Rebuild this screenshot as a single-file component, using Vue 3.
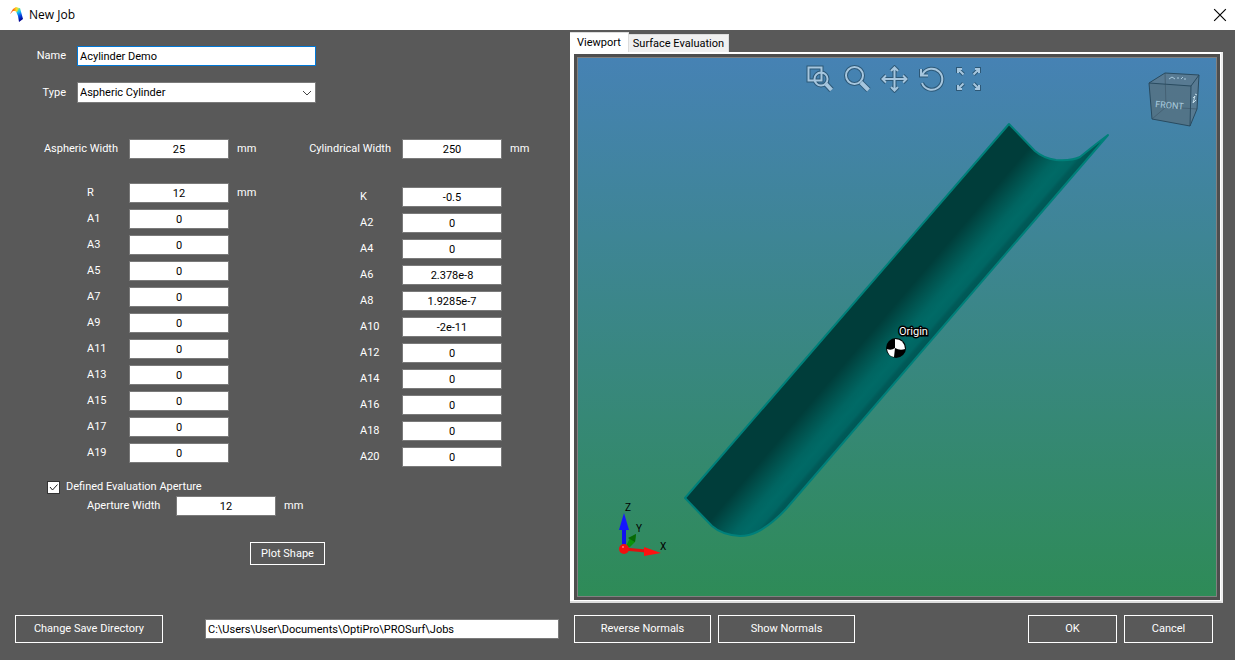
<script setup>
import { ref, reactive } from 'vue'

const name = ref('Acylinder Demo')
const type = ref('Aspheric Cylinder')
const directory = ref('C:\\Users\\User\\Documents\\OptiPro\\PROSurf\\Jobs')
const apertureOn = ref(true)
const apertureWidth = ref('12')
const tab = ref('viewport')

const widths = reactive([
  { id: 'aspheric-width', label: 'Aspheric Width', value: '25' },
  { id: 'cylindrical-width', label: 'Cylindrical Width', value: '250' },
])

const term = (label, value = '0', unit = '') => ({ id: 'coef-' + label, label, value, unit })

const columns = reactive([
  {
    key: 'odd',
    terms: [
      term('R', '12', 'mm'), term('A1'), term('A3'), term('A5'), term('A7'), term('A9'),
      term('A11'), term('A13'), term('A15'), term('A17'), term('A19'),
    ],
  },
  {
    key: 'even',
    terms: [
      term('K', '-0.5'), term('A2'), term('A4'), term('A6', '2.378e-8'), term('A8', '1.9285e-7'),
      term('A10', '-2e-11'), term('A12'), term('A14'), term('A16'), term('A18'), term('A20'),
    ],
  },
])

const tools = [
  {
    label: 'Zoom window',
    d: 'M2.5 2.5H15.5V15.5H2.5ZM21.5 14A6.500 6.500 0 1 1 8.500 14A6.500 6.500 0 1 1 21.5 14Z',
    handle: 'M20 19L25.500 25',
  },
  {
    label: 'Zoom',
    d: 'M20 10.500A8.500 8.500 0 1 1 3 10.500A8.500 8.500 0 1 1 20 10.500Z',
    handle: 'M18 17.500L25.500 25',
  },
  {
    label: 'Pan',
    d: 'M14.5 3V25M3 14H26M11 6L14.500 2.500L18 6M11 22L14.500 25.500L18 22M6 10.500L2.500 14L6 17.500M23 10.500L26.500 14L23 17.500',
  },
  {
    label: 'Rotate',
    d: 'M5 18A10.500 10.500 0 1 0 6 8.500L5 10M4 4V10.500H11',
  },
  {
    label: 'Zoom fit',
    d: 'M4 8V4H8M4 4L9.500 9.500M21 4H25V8M25 4L19.500 9.500M4 20V24H8M4 24L9.500 18.500M21 24H25V20M25 24L19.500 18.500',
  },
]
</script>

<template>
  <div class="window">
    <header class="titlebar">
      <svg class="logo" viewBox="0 0 14 16" aria-hidden="true">
        <defs>
          <linearGradient id="logo-top" x1="0" y1="0" x2="1" y2="0">
            <stop offset="0" stop-color="#e02810" />
            <stop offset="0.400" stop-color="#ff7a10" />
            <stop offset="0.700" stop-color="#ffd820" />
            <stop offset="1" stop-color="#a8e860" />
          </linearGradient>
          <linearGradient id="logo-side" x1="0" y1="0" x2="0.300" y2="1">
            <stop offset="0" stop-color="#f0e020" />
            <stop offset="0.200" stop-color="#60e0a0" />
            <stop offset="0.400" stop-color="#18c0f0" />
            <stop offset="0.650" stop-color="#0850e8" />
            <stop offset="1" stop-color="#000090" />
          </linearGradient>
        </defs>
        <path d="M5 2L10 1L13 12L9 15L8 9Z" fill="url(#logo-side)" />
        <path d="M0 7L3 2L6 0L9 1L7 5L5 4L3 4Z" fill="url(#logo-top)" />
      </svg>
      <h1>New Job</h1>
      <button class="close" type="button" aria-label="Close">
        <svg viewBox="0 0 12 12"><path d="M1 1L11 11M11 1L1 11" /></svg>
      </button>
    </header>

    <main class="content">
      <form class="form" @submit.prevent>
        <div class="head-row">
          <label for="job-name">Name</label>
          <input id="job-name" v-model="name" class="field focused" type="text" />
        </div>
        <div class="head-row type-row">
          <label for="job-type">Type</label>
          <div class="select-wrap">
            <select id="job-type" v-model="type" class="field">
              <option>Aspheric Cylinder</option>
            </select>
            <svg class="chevron" viewBox="0 0 10 6" aria-hidden="true"><path d="M1 1L5 5L9 1" /></svg>
          </div>
        </div>

        <div class="columns widths">
          <div v-for="w in widths" :key="w.id" class="row width-row">
            <label :for="w.id">{{ w.label }}</label>
            <input :id="w.id" v-model="w.value" class="field number" type="text" />
            <span class="unit">mm</span>
          </div>
        </div>

        <div class="columns">
          <div v-for="c in columns" :key="c.key" class="column" :class="c.key">
            <div v-for="t in c.terms" :key="t.id" class="row">
              <label :for="t.id">{{ t.label }}</label>
              <input :id="t.id" v-model="t.value" class="field number" type="text" />
              <span class="unit">{{ t.unit }}</span>
            </div>
          </div>
        </div>

        <label class="check">
          <span class="box">
            <input v-model="apertureOn" type="checkbox" />
            <svg v-if="apertureOn" viewBox="0 0 13 13" aria-hidden="true"><path d="M3 6L5.500 9L10.500 3.500" /></svg>
          </span>
          <span>Defined Evaluation Aperture</span>
        </label>
        <div class="row aperture">
          <label for="aperture">Aperture Width</label>
          <input id="aperture" v-model="apertureWidth" class="field number" type="text" />
          <span class="unit">mm</span>
        </div>
        <button class="btn plot" type="button">Plot Shape</button>
      </form>

      <section class="viewer">
        <div class="tabs" role="tablist">
          <button type="button" role="tab" :class="{ active: tab === 'viewport' }" @click="tab = 'viewport'">Viewport</button>
          <button type="button" role="tab" :class="{ active: tab === 'surface' }" @click="tab = 'surface'">Surface Evaluation</button>
        </div>
        <div class="panel">
          <div class="viewport">
            <svg class="scene" viewBox="577 57 640 540">
              <defs>
                <linearGradient id="shade" gradientUnits="userSpaceOnUse" x1="1009" y1="123" x2="1072" y2="177">
                  <stop offset="0" stop-color="#003d3a" />
                  <stop offset="0.380" stop-color="#003d3a" />
                  <stop offset="0.550" stop-color="#00534f" />
                  <stop offset="0.700" stop-color="#006561" />
                  <stop offset="0.800" stop-color="#006a66" />
                  <stop offset="0.890" stop-color="#006663" />
                  <stop offset="0.930" stop-color="#005a58" />
                  <stop offset="1" stop-color="#005654" />
                </linearGradient>
              </defs>
              <path
                d="M1009 124L1035 151Q1043 158 1056 160Q1072 161 1080 157Q1092 147 1108 135L786 509Q771 525 757 532Q749 536 740 536Q722 535 712 526L685 498Z"
                fill="url(#shade)" stroke="#00807a" stroke-width="2" stroke-linejoin="round"
              />

              <g>
                <path d="M1149 83L1165 73L1199 75L1197 109L1190 126L1152 119Z" fill="#56707f" fill-opacity="0.800" />
                <path d="M1149 83L1165 73L1199 75L1191 86ZM1191 86L1199 75L1197 109L1190 126Z" fill="#5c7f97" fill-opacity="0.600" />
                <path d="M1165 73L1166 107L1152 119M1166 107L1197 109" stroke="#456174" fill="none" />
                <path d="M1149 83L1165 73L1199 75L1191 86ZM1149 83L1152 119L1190 126L1191 86M1199 75L1197 109L1190 126" stroke="#294b60" fill="none" />
                <text x="1155" y="107" transform="rotate(5 1155 107)" class="face">FRONT</text>
                <path d="M1169 79L1172 77L1175 79M1177 78H1179M1181 79L1183 77M1186 79H1184" stroke="#a9cadd" fill="none" />
                <path d="M1193 98L1195 96L1193 103L1196 100M1195 94L1197 95" stroke="#c5deea" fill="none" />
              </g>

              <g>
                <path d="M625 548L630 538L636 534L635 542L630 547Z" fill="#0a930a" />
                <path d="M628 538L636 534L635 542Z" fill="#076807" />
                <path d="M624 548V527" stroke="#1010f0" stroke-width="4" />
                <path d="M624 513L629 530H619Z" fill="#1515ff" />
                <path d="M624 549L646 551" stroke="#e01010" stroke-width="3" />
                <path d="M644 547L661 553L644 556Z" fill="#ff1010" />
                <circle cx="624" cy="549" r="5" fill="#f01010" />
                <circle cx="623" cy="547" r="1" fill="#ff7a7a" />
                <g font-size="10" fill="#000">
                  <text x="625" y="511">Z</text>
                  <text x="636" y="532">Y</text>
                  <text x="660" y="550">X</text>
                </g>
              </g>

              <g>
                <circle cx="896" cy="348" r="10" fill="#000" />
                <path d="M895 348L895 339Q904 339 905 349Q900 351 895 348Z" fill="#fff" />
                <path d="M895 348L894 357Q888 356 887 349Q891 351 895 348Z" fill="#fff" />
                <text x="899" y="335" class="origin">Origin</text>
              </g>
            </svg>

            <div class="toolbar">
              <button v-for="t in tools" :key="t.label" type="button" :aria-label="t.label">
                <svg viewBox="0 0 28 28">
                  <path class="edge" :d="t.d" />
                  <path v-if="t.handle" class="edge thick" :d="t.handle" />
                  <path class="line" :d="t.d" />
                  <path v-if="t.handle" class="line thick" :d="t.handle" />
                </svg>
              </button>
            </div>
          </div>
        </div>
      </section>
    </main>

    <footer class="footer">
      <div class="save">
        <button class="btn change" type="button">Change Save Directory</button>
        <input v-model="directory" class="field path" type="text" aria-label="Save directory" />
      </div>
      <div class="actions">
        <button class="btn wide" type="button">Reverse Normals</button>
        <button class="btn wide" type="button">Show Normals</button>
        <span class="spacer"></span>
        <button class="btn small" type="button">OK</button>
        <button class="btn small" type="button">Cancel</button>
      </div>
    </footer>
  </div>
</template>

<style>
body {
  background: #595959;
}
</style>

<style scoped>
.window {
  display: flex;
  flex-direction: column;
  min-height: 100vh;
  background: #595959;
  color: #fff;
  font-family: Roboto, "Liberation Sans", sans-serif;
  font-size: 11px;
  line-height: 16px;
}
.window * {
  box-sizing: border-box;
}
button,
input,
select {
  margin: 0;
  font: inherit;
}
.titlebar {
  display: flex;
  align-items: center;
  height: 30px;
  padding: 0 8px 0 10px;
  background: #fff;
  color: #000;
}
.logo {
  width: 14px;
  height: 16px;
  margin-right: 5px;
}
h1 {
  flex: 1;
  margin: 0;
  font: 12px/16px "Open Sans", sans-serif;
}
.close {
  display: flex;
  padding: 0;
  border: 0;
  background: none;
}
.close svg {
  width: 14px;
  height: 14px;
  fill: none;
  stroke: #000;
}
.content {
  flex: 1;
  display: flex;
}
.form {
  flex: 0 0 570px;
  padding-top: 16px;
}
.head-row {
  display: grid;
  grid-template-columns: 66px 239px;
  column-gap: 11px;
  align-items: center;
}
.head-row > label {
  text-align: right;
}
.type-row {
  margin-top: 16px;
}
.field {
  width: 100%;
  height: 20px;
  padding: 0 2px;
  border: 1px solid #7a7a7a;
  border-radius: 0;
  outline: 0;
  background: #fff;
  color: #000;
}
.focused {
  border-color: #0078d7;
}
.number {
  text-align: center;
}
.select-wrap {
  position: relative;
}
.select-wrap select {
  display: block;
  height: 21px;
  appearance: none;
}
.chevron {
  position: absolute;
  right: 4px;
  top: 8px;
  width: 10px;
  height: 6px;
  fill: none;
  stroke: #444;
  pointer-events: none;
}
.columns {
  display: grid;
  grid-template-columns: 273px 273px;
}
.widths {
  margin: 36px 0 24px;
}
.column {
  display: grid;
  row-gap: 6px;
  align-content: start;
}
.even {
  padding-top: 4px;
}
.row {
  display: grid;
  grid-template-columns: 129px 100px 1fr;
  align-items: center;
}
.row > label {
  padding-left: 87px;
}
.width-row > label {
  padding: 0 11px 0 0;
  text-align: right;
  white-space: nowrap;
}
.unit {
  padding-left: 8px;
}
.check {
  display: flex;
  align-items: center;
  gap: 6px;
  width: max-content;
  margin: 12px 0 1px 47px;
}
.box {
  display: grid;
  width: 13px;
  height: 13px;
}
.box > * {
  grid-area: 1 / 1;
  width: 13px;
  height: 13px;
}
.box input {
  appearance: none;
  border: 1px solid #333;
  background: #fff;
}
.box svg {
  fill: none;
  stroke: #222;
  pointer-events: none;
  z-index: 1;
}
.aperture {
  grid-template-columns: 176px 100px 1fr;
}
.btn {
  height: 28px;
  padding: 0;
  border: 1px solid #fff;
  background: transparent;
  color: #fff;
}
.plot {
  display: block;
  width: 75px;
  height: 23px;
  margin: 26px 0 0 250px;
}
.viewer {
  flex: 1;
  display: flex;
  flex-direction: column;
  padding: 2px 12px 0 0;
}
.tabs {
  display: flex;
  align-items: flex-end;
  height: 20px;
}
.tabs button {
  height: 18px;
  padding: 0 4px;
  border: 1px solid #dcdcdc;
  border-bottom: 0;
  border-left: 0;
  background: #f0f0f0;
  color: #000;
  white-space: nowrap;
}
.tabs button.active {
  height: 20px;
  padding: 0 7px;
  background: #fff;
}
.panel {
  flex: 1;
  display: flex;
  padding: 2px 1px 1px 4px;
  background: #fff;
  border-right: 2px solid #eee;
  border-bottom: 2px solid #ddd;
}
.viewport {
  position: relative;
  flex: 1;
  display: flex;
  border: 3px solid #4e4e4e;
  outline: 1px solid #808080;
  outline-offset: -4px;
  background: linear-gradient(#4682b4, #2e8b57);
}
.scene {
  flex: 1;
  width: 100%;
  min-width: 0;
}
.face {
  font-size: 9px;
  fill: #a9cadd;
}
.origin {
  font-size: 11px;
  fill: #fff;
  stroke: #000;
  stroke-width: 3px;
  paint-order: stroke;
}
.toolbar {
  position: absolute;
  top: 8px;
  left: 0;
  right: 6px;
  display: flex;
  justify-content: center;
  gap: 9px;
}
.toolbar button {
  display: flex;
  padding: 0;
  border: 0;
  background: none;
}
.toolbar svg {
  width: 28px;
  height: 28px;
  fill: none;
}
.edge {
  stroke: #2d5877;
  stroke-width: 4;
}
.line {
  stroke: #a6c6de;
  stroke-width: 2;
}
.edge.thick {
  stroke-width: 6;
}
.line.thick {
  stroke-width: 4;
}
.footer {
  display: flex;
  padding: 12px 22px 17px 15px;
}
.save {
  flex: 0 0 559px;
  display: flex;
  align-items: center;
}
.change {
  width: 148px;
}
.path {
  width: 354px;
  margin-left: 42px;
}
.actions {
  flex: 1;
  display: flex;
  gap: 7px;
}
.wide {
  width: 137px;
}
.small {
  width: 89px;
}
.spacer {
  flex: 1;
}
</style>
